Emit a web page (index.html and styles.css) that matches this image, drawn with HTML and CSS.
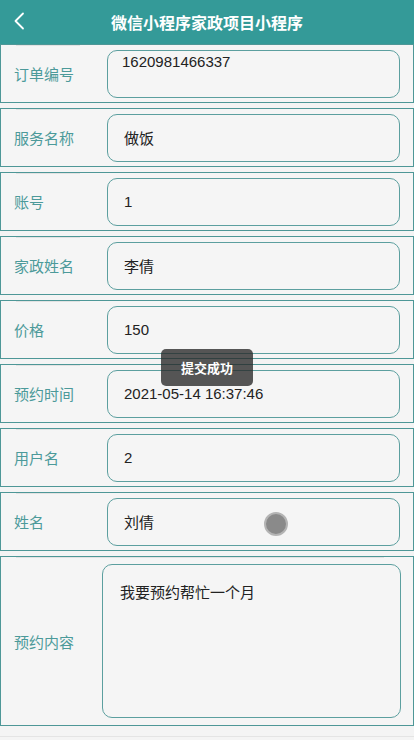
FILE: index.html
```html
<!DOCTYPE html>
<html lang="zh-CN">
<head>
<meta charset="utf-8">
<title>微信小程序家政项目小程序</title>
<link rel="stylesheet" href="styles.css">
</head>
<body>
<header class="nav">
  <svg class="back" viewBox="0 0 12 18" width="12" height="18"><path d="M10 1.5 L2.5 9 L10 16.5" fill="none" stroke="#fff" stroke-width="1.8" stroke-linecap="round" stroke-linejoin="round"/></svg>
  <h1 class="title">微信小程序家政项目小程序</h1>
</header>
<main class="form">
  <div class="row"><span class="label">订单编号</span><div class="field field-top">1620981466337</div></div>
  <div class="row"><span class="label">服务名称</span><div class="field">做饭</div></div>
  <div class="row"><span class="label">账号</span><div class="field">1</div></div>
  <div class="row"><span class="label">家政姓名</span><div class="field">李倩</div></div>
  <div class="row"><span class="label">价格</span><div class="field">150</div></div>
  <div class="row"><span class="label">预约时间</span><div class="field">2021-05-14 16:37:46</div></div>
  <div class="row"><span class="label">用户名</span><div class="field">2</div></div>
  <div class="row"><span class="label">姓名</span><div class="field">刘倩</div></div>
  <div class="row row-tall"><span class="label">预约内容</span><div class="area">我要预约帮忙一个月</div></div>
</main>
<div class="bottom-line"></div>
<div class="toast">提交成功</div>
<div class="touch"></div>
</body>
</html>
```
FILE: styles.css
```css
* { box-sizing: border-box; }
html, body { margin: 0; padding: 0; }
body {
  width: 414px;
  height: 740px;
  background: #f4f4f4;
  font-family: "Liberation Sans", "Noto Sans CJK SC", sans-serif;
  position: relative;
  overflow: hidden;
}
.nav {
  height: 44px;
  background: #349a98;
  display: flex;
  align-items: center;
  justify-content: center;
  position: relative;
}
.back {
  position: absolute;
  left: 13px;
  top: 12px;
}
.title {
  margin: 0;
  color: #fff;
  font-size: 16px;
  font-weight: bold;
  letter-spacing: 0;
}
.form {
  display: flex;
  flex-direction: column;
  gap: 5px;
}
.row {
  height: 59px;
  border: 1px solid #4e9797;
  background: #f5f5f5;
  display: flex;
  align-items: center;
  position: relative;
}
.row::before {
  content: "";
  position: absolute;
  left: 15px;
  top: 0;
  width: 64px;
  height: 1px;
  background: #e2e2e2;
}
.row-tall::before { width: 368px; }
.label {
  width: 106px;
  padding-left: 13px;
  color: #4c9a9a;
  font-size: 15px;
  flex: none;
}
.field {
  width: 293px;
  height: 48px;
  border: 1px solid #5c9f9f;
  border-radius: 10px;
  padding-left: 16px;
  display: flex;
  align-items: center;
  font-size: 15px;
  color: #222;
}
.field-top {
  align-items: flex-start;
  padding-top: 2px;
  padding-left: 14px;
}
.row-tall {
  height: 170px;
}
.row-tall .label { width: 101px; }
.area {
  width: 299px;
  height: 154px;
  border: 1px solid #5c9f9f;
  border-radius: 10px;
  padding: 16px 17px;
  font-size: 15px;
  color: #222;
}
.bottom-line {
  margin-top: 10px;
  height: 1px;
  background: #e4e4e4;
}
.toast {
  position: absolute;
  left: 161px;
  top: 349px;
  width: 92px;
  height: 37px;
  border-radius: 5px;
  background: rgba(40, 40, 40, 0.78);
  color: #fff;
  font-size: 13px;
  font-weight: bold;
  display: flex;
  align-items: center;
  justify-content: center;
}
.touch {
  position: absolute;
  left: 264px;
  top: 512px;
  width: 24px;
  height: 24px;
  border-radius: 50%;
  background: #8a8a8a;
  border: 2px solid #b4b4b4;
}
```
